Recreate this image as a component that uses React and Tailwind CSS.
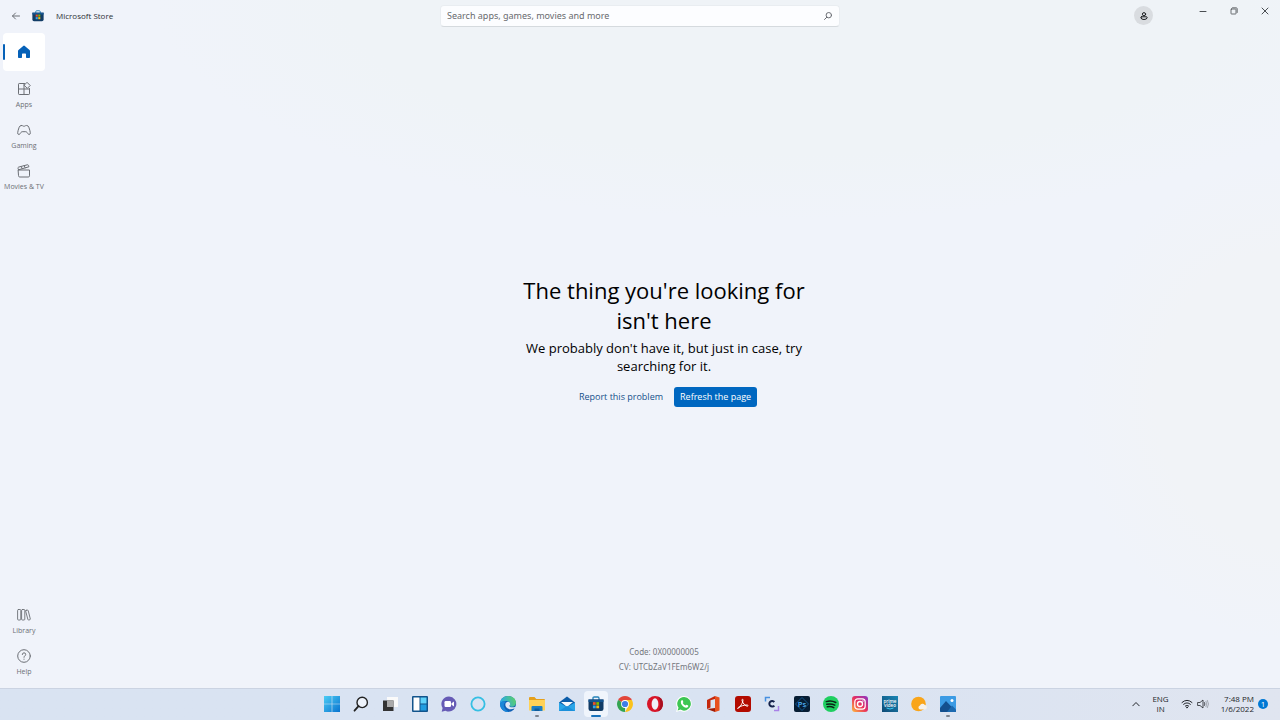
import React, { useState } from 'react';
import { clsx } from 'clsx';

const line = { fill: 'none', stroke: 'currentColor', strokeLinecap: 'round', strokeLinejoin: 'round' };

/* ---------- Store icons ---------- */

function StoreBag({ className }) {
  return (
    <svg viewBox="0 0 16 16" className={className}>
      <path d="M5 4V2.2Q5 1 6.2 1h3.6Q11 1 11 2.2V4" fill="none" stroke="#2583b8" strokeWidth="1.3" />
      <path d="M0.5 3.5h15v9.3q0 2.2-2.2 2.2H2.7Q.5 15 .5 12.8z" fill="#123c66" />
      <path d="M.5 3.5h15V6H.5z" fill="#155590" />
      <path d="M4.9 6.1h2.8v2.8H4.9z" fill="#e8552b" />
      <path d="M8.3 6.1h2.8v2.8H8.3z" fill="#7fba00" />
      <path d="M4.9 9.5h2.8v2.8H4.9z" fill="#35a5e1" />
      <path d="M8.3 9.5h2.8v2.8H8.3z" fill="#f5b915" />
    </svg>
  );
}

function HomeIcon() {
  return (
    <svg viewBox="0 0 14 14" className="w-3.5 h-3.5">
      <path d="M6.2.9q.8-.7 1.6 0l4.7 4q.5.5.5 1.2v6.1q0 .8-.8.8H9.7q-.7 0-.7-.7V9.2q0-.7-.7-.7H5.7Q5 8.5 5 9.2v3.1q0 .7-.7.7H1.8q-.8 0-.8-.8V6.1q0-.7.5-1.2z" fill="#0561b8" />
    </svg>
  );
}

function AppsIcon() {
  return (
    <svg viewBox="0 0 14 14" className="w-3.5 h-3.5" {...line}>
      <path d="M7.5 1.5H2.2q-.7 0-.7.7v9.6q0 .7.7.7h9.600q.7 0 .7-.7V6.500M1.500 7h11M7 1.500v11" />
      <path d="M10.300.6l2.900 2.900-2.900 2.900-2.900-2.900z" />
    </svg>
  );
}

function GamingIcon() {
  return (
    <svg viewBox="0 0 14 14" className="w-3.5 h-3.5" {...line}>
      <path d="M4.300 2.500h.6q.5 0 .9.400.4.300 1.200.3t1.200-.3q.4-.4.900-.4h.6q1.500 0 2.100 1.700 1.300 3.300 1.500 5.500.1 1.800-1.100 1.800-.7 0-1.200-.7L9.900 9.300Q9.500 8.700 8.800 8.700H5.200q-.7 0-1.100.6L3 10.800q-.5.700-1.200.7Q.6 11.500.7 9.700.9 7.500 2.200 4.200 2.800 2.500 4.300 2.500z" />
    </svg>
  );
}

function MoviesIcon() {
  return (
    <svg viewBox="0 0 14 14" className="w-3.5 h-3.5" {...line}>
      <path d="M1.500 6h11v5.800q0 1.200-1.200 1.200H2.700q-1.200 0-1.200-1.200zM1.500 5.800L1 4.300q-.2-.9.600-1.200L10.300.8q.9-.2 1.200.6l.4 1.400L1.500 5.800M4.200 2.600l1 2M7.200 1.800l1 2" />
    </svg>
  );
}

function LibraryIcon() {
  return (
    <svg viewBox="0 0 14 14" className="w-3.5 h-3.5" {...line} strokeWidth=".9">
      <rect x=".6" y="1.500" width="3.200" height="10.500" rx=".8" />
      <rect x="4.600" y="1.500" width="3.200" height="10.500" rx=".8" />
      <path d="M9.100 2.400l1.300-.3q.6-.1.800.5l2.100 8.300q.1.600-.4.800l-1.200.3q-.6.100-.8-.5L8.700 3.200q-.1-.6.400-.8z" />
    </svg>
  );
}

function HelpIcon() {
  return (
    <svg viewBox="0 0 14 14" className="w-3.5 h-3.5" {...line}>
      <circle cx="7" cy="7" r="6.300" />
      <path d="M5.300 5.500Q5.400 3.800 7 3.800t1.700 1.600Q8.700 6.300 7.700 7 7 7.500 7 8.300M7 10.100v.2" />
    </svg>
  );
}

/* ---------- Taskbar icons ---------- */

const TASKS = [
  {
    name: 'Start',
    art: (
      <>
        <defs>
          <linearGradient id="win" x1="0" y1="0" x2="1" y2="1">
            <stop offset="0" stopColor="#4ccdf5" />
            <stop offset="1" stopColor="#0873cf" />
          </linearGradient>
        </defs>
        <path d="M0 0h7.700v7.700H0zM8.300 0H16v7.700H8.300zM0 8.300h7.700V16H0zM8.300 8.300H16V16H8.300z" fill="url(#win)" />
      </>
    ),
  },
  {
    name: 'Search',
    art: (
      <>
        <circle cx="9.200" cy="6.400" r="5.200" fill="#eef3fb" stroke="#222" strokeWidth="1.400" />
        <path d="M5.500 10.200L1.500 14.700" stroke="#222" strokeWidth="1.800" strokeLinecap="round" />
      </>
    ),
  },
  {
    name: 'Task View',
    art: (
      <>
        <path d="M5 1h11v10H5z" fill="#fafafa" />
        <path d="M1 4.500h10.500V15H1z" fill="#333" />
        <path d="M5 4.500h6.500V11H5z" fill="#aaa" />
      </>
    ),
  },
  {
    name: 'Widgets',
    art: (
      <>
        <rect width="16" height="16" rx="1" fill="#12548c" />
        <path d="M1.500 1.500h6v13h-6z" fill="#fff" />
        <path d="M8.500 1.500h6v6h-6z" fill="#5fd3fa" />
        <path d="M8.500 8.500h6v6h-6z" fill="#209de0" />
      </>
    ),
  },
  {
    name: 'Chat',
    art: (
      <>
        <path d="M8 .5a7.500 7.500 0 1 1-3.500 14.200L.7 15.700l.9-3.700A7.500 7.500 0 0 1 8 .5z" fill="#665bb5" />
        <rect x="3.500" y="5" width="6.500" height="6" rx="1.200" fill="#fff" />
        <path d="M10.500 7.300L13 5.500v5l-2.500-1.800z" fill="#fff" />
      </>
    ),
  },
  {
    name: 'Cortana',
    art: <circle cx="8" cy="8" r="6.600" fill="none" stroke="#35bfe3" strokeWidth="1.800" />,
  },
  {
    name: 'Microsoft Edge',
    art: (
      <>
        <defs>
          <linearGradient id="edge" x1="0" y1=".3" x2="1" y2="0">
            <stop offset="0" stopColor="#2aa9e8" />
            <stop offset="1" stopColor="#5fd35d" />
          </linearGradient>
        </defs>
        <circle cx="8" cy="8" r="8" fill="#0f5fb5" />
        <path d="M0 8C0 3.500 3.500 0 8 0c4.800 0 8 3.300 8 6.700 0 2.300-1.700 4-4 4-1.800 0-3-.7-2.300-1.500 1-1.200.4-3.700-2.200-4C3.800 4.800.6 6 0 8z" fill="url(#edge)" />
        <path d="M9.700 9.200c1-1.200.3-3.200-1.400-3.400C5.800 5.700 5 8 5.500 9.800c.8 3 4.500 4.300 8.900 2.700.4-.1.700.1.500.5 1-.8 1.200-2 .8-2.600-1.300.8-2.300.9-3.700.8-1.900-.1-3.100-.8-2.300-2z" fill="#dce6f5" />
        <path d="M0 8c.4-2.600 3.800-3.500 6.400-2.100C4 6.400 3.200 9 4.400 11.600c.8 1.800 2.300 3.200 4.600 4.200C4 16.600 0 12.700 0 8z" fill="#1986d8" />
      </>
    ),
  },
  {
    name: 'File Explorer',
    running: true,
    art: (
      <>
        <path d="M0 2q0-1 1-1h4.500l1.800 2H15q1 0 1 1v3H0z" fill="#e5a01b" />
        <path d="M0 4h16v10q0 .5-.5.500H.5q-.5 0-.5-.5z" fill="#ffd257" />
        <path d="M2.500 11q0-1 1-1h9q1 0 1 1v4h-11z" fill="#1c7fc4" />
        <path d="M5.500 12.500h5V15h-5z" fill="#0e5c9c" />
      </>
    ),
  },
  {
    name: 'Mail',
    art: (
      <>
        <path d="M0 6.500L8 .5l8 6V15H0z" fill="#0b5ca8" />
        <path d="M2 6h12l-6 5z" fill="#f4f8fc" />
        <path d="M0 6.500l8 4.500 8-4.500V15H0z" fill="#29a5e8" />
        <path d="M0 15l8-5 8 5z" fill="#1b90da" />
      </>
    ),
  },
  { name: 'Microsoft Store', active: true, running: true },
  {
    name: 'Google Chrome',
    art: (
      <>
        <path d="M8 8L1.100 4A8 8 0 0 1 14.900 4z" fill="#e2463a" />
        <path d="M8 8v8A8 8 0 0 1 1.100 4z" fill="#33a452" />
        <path d="M8 4h6.900A8 8 0 0 1 8 16l3.500-6z" fill="#fbc31c" />
        <circle cx="8" cy="8" r="3.900" fill="#fff" />
        <circle cx="8" cy="8" r="3.100" fill="#3e7ee8" />
      </>
    ),
  },
  {
    name: 'Opera',
    art: (
      <>
        <circle cx="8" cy="8" r="8" fill="#d81528" />
        <path d="M11 .6A8 8 0 0 1 11 15.400C14 12 14 4 11 .6z" fill="#a80f20" />
        <ellipse cx="8" cy="8" rx="3.400" ry="5.700" fill="#eef2f9" />
      </>
    ),
  },
  {
    name: 'WhatsApp',
    art: (
      <>
        <path d="M8.200 0a7.800 7.800 0 1 1-3.900 14.700L0 16l1.300-4.200A7.800 7.800 0 0 1 8.200 0z" fill="#fff" />
        <path d="M8.200 1a6.800 6.800 0 1 1-3.700 12.600L1.600 14.500l.9-2.800A6.800 6.800 0 0 1 8.200 1z" fill="#3cc653" />
        <path d="M5.600 4.200q.8-.5 1.200.4l.5 1.300q.1.500-.6 1.200 1 1.800 2.700 2.500.8-1 1.200-.9l1.500.8q.4.300.1 1-.6 1.200-2.200 1.200Q6.500 11 5 7.500q-.6-2.200.6-3.300z" fill="#fff" />
      </>
    ),
  },
  {
    name: 'Office',
    art: (
      <>
        <path d="M10 0l4.500 1.500v13L10 16z" fill="#e8501e" />
        <path d="M10 0v3L5.500 4.200v7.300L2 13V4z" fill="#c5280c" />
        <path d="M2 13l8-1v4z" fill="#a11d08" />
      </>
    ),
  },
  {
    name: 'Adobe Acrobat',
    art: (
      <>
        <rect width="16" height="16" rx="3" fill="#b30b00" />
        <path d="M3 12.500C4.500 12 8.600 6 7.900 3.600 7.500 2.700 6.700 3.500 7.200 5c.7 2.300 3.200 5.200 5.200 5.200 1.300-.1.800-1.300-1-1.200-2.500.1-5.400 1-7.800 2.300-1 .7-1.300 1.300-.6 1.200z" fill="none" stroke="#fff" />
      </>
    ),
  },
  {
    name: 'Capture',
    art: (
      <>
        <path d="M1.500 5.500V1.500h4.500" fill="none" stroke="#4790e0" strokeWidth="1.500" />
        <path d="M14.500 10v4.500H10" fill="none" stroke="#a982e8" strokeWidth="1.500" />
        <path d="M10.300 6A2.800 2.800 0 1 0 10.300 9.600" fill="none" stroke="#15224a" strokeWidth="2" />
      </>
    ),
  },
  {
    name: 'Photoshop',
    art: (
      <>
        <rect width="16" height="16" rx="2" fill="#071d33" />
        <path d="M8 1.500L14.500 8 8 14.500 1.500 8z" fill="none" stroke="#1766a5" strokeWidth=".8" />
        <text x="8" y="10.700" textAnchor="middle" fontSize="7.500" fontWeight="600" fill="#4fb0f5">Ps</text>
      </>
    ),
  },
  {
    name: 'Spotify',
    art: (
      <>
        <circle cx="8" cy="8" r="8" fill="#1fcf60" />
        <path d="M3.300 5.600q5-1.400 9.500.9M3.800 8.300q4.300-1.100 8 .9M4.300 10.800q3.500-.8 6.500.9" fill="none" stroke="#0c2415" strokeWidth="1.500" strokeLinecap="round" />
      </>
    ),
  },
  {
    name: 'Instagram',
    art: (
      <>
        <defs>
          <linearGradient id="insta" x1="0" y1="1" x2="1" y2="0">
            <stop offset="0" stopColor="#ffb93b" />
            <stop offset=".5" stopColor="#e8305f" />
            <stop offset="1" stopColor="#8a35c8" />
          </linearGradient>
        </defs>
        <rect width="16" height="16" rx="3" fill="url(#insta)" />
        <rect x="2.800" y="2.800" width="10.400" height="10.400" rx="3" fill="none" stroke="#fff" strokeWidth="1.200" />
        <circle cx="8" cy="8" r="2.500" fill="none" stroke="#fff" strokeWidth="1.300" />
        <circle cx="11" cy="5" r=".7" fill="#fff" />
      </>
    ),
  },
  {
    name: 'Prime Video',
    art: (
      <>
        <defs>
          <linearGradient id="prime" x1="0" y1="1" x2="1" y2="0">
            <stop offset="0" stopColor="#0e4a75" />
            <stop offset="1" stopColor="#1a86b5" />
          </linearGradient>
        </defs>
        <rect width="16" height="16" fill="url(#prime)" />
        <g fill="#fff" fontSize="4.500" fontWeight="600" textAnchor="middle">
          <text x="8" y="6.500">prime</text>
          <text x="8" y="10.500">video</text>
        </g>
        <path d="M4.500 12q3.500 2 7 0" fill="none" stroke="#3ccaf4" />
      </>
    ),
  },
  {
    name: 'Weather',
    art: (
      <>
        <circle cx="7.500" cy="8" r="7.300" fill="#f9a51a" />
        <path d="M9 13.500a2 2 0 0 1 0-3.900 2.700 2.700 0 0 1 4.800-.6 2.300 2.300 0 0 1 .4 4.500z" fill="#f5f1ea" />
      </>
    ),
  },
  {
    name: 'Photos',
    running: true,
    art: (
      <>
        <rect width="16" height="16" rx="1" fill="#3c9be4" />
        <path d="M0 12l6-7 10 10.500-.5.500H1q-1 0-1-1z" fill="#134f8e" />
        <path d="M7 16l5-6.500 4 4V15q0 1-1 1z" fill="#1c6ab0" />
        <circle cx="12" cy="4.500" r="1.500" fill="#fff" />
      </>
    ),
  },
];

const NAV = [
  { id: 'apps', label: 'Apps', Icon: AppsIcon },
  { id: 'gaming', label: 'Gaming', Icon: GamingIcon },
  { id: 'movies', label: 'Movies & TV', Icon: MoviesIcon },
];

const FOOTER_NAV = [
  { id: 'library', label: 'Library', Icon: LibraryIcon },
  { id: 'help', label: 'Help', Icon: HelpIcon },
];

function NavButton({ label, Icon }) {
  return (
    <button className="flex h-[41px] w-full flex-col items-center justify-center gap-1 whitespace-nowrap text-[7px] leading-[10px] text-[#6c6f75]">
      <Icon />
      {label}
    </button>
  );
}

function TitleBar() {
  const [query, setQuery] = useState('');

  return (
    <header className="grid h-8 grid-cols-[1fr_minmax(0,400px)_1fr]">
      <div className="flex items-center pl-3">
        <button aria-label="Back" className="text-[#6b6e74]">
          <svg viewBox="0 0 8 8" className="h-2 w-2" {...line}>
            <path d="M7.500 4h-7M3.500 1L.5 4l3 3" />
          </svg>
        </button>
        <StoreBag className="ml-3 h-3 w-3" />
        <h1 className="ml-3 text-[8px] text-[#2d3036]">Microsoft Store</h1>
      </div>

      <label className="mt-[5px] flex h-[22px] items-center rounded-sm border border-b-[#d5dade] border-[#e9edf1] bg-[#fcfdff] px-1.5">
        <input
          value={query}
          onChange={(e) => setQuery(e.target.value)}
          aria-label="Search"
          placeholder="Search apps, games, movies and more"
          className="min-w-0 flex-1 font-['Noto_Sans',sans-serif] text-[9px] outline-none placeholder:text-[#686a6e]"
        />
        <svg viewBox="0 0 8 8" className="mr-px h-2 w-2 text-[#6b6e74]" {...line}>
          <circle cx="4.800" cy="3.200" r="2.700" />
          <path d="M2.800 5.200L.5 7.500" />
        </svg>
      </label>

      <div className="flex items-start justify-end">
        <button aria-label="Account" className="mr-[34px] mt-1.5 flex h-[19px] w-[19px] items-center justify-center rounded-full bg-[#d9dce0] text-[#17191c]">
          <svg viewBox="0 0 8 8" className="h-2 w-2" {...line}>
            <circle cx="4" cy="2.200" r="1.600" />
            <path d="M1.500 4.800h5q.7 0 .7.700Q7 7.500 4 7.500T.8 5.500q0-.7.700-.7z" />
          </svg>
        </button>
        <div className="flex text-[#4a4d52]">
          <button aria-label="Minimize" className="flex h-[21px] w-[31px] items-center justify-center">
            <svg viewBox="0 0 8 8" className="h-2 w-2" {...line}><path d="M1 4.500h6" /></svg>
          </button>
          <button aria-label="Restore" className="flex h-[21px] w-[31px] items-center justify-center">
            <svg viewBox="0 0 8 8" className="h-2 w-2" {...line} strokeWidth=".8">
              <path d="M1.500 2h4q.5 0 .5.500v4q0 .5-.5.500h-4Q1 7 1 6.500v-4Q1 2 1.500 2zM2.500.8h3.700q1 0 1 1v3.700" />
            </svg>
          </button>
          <button aria-label="Close" className="flex h-[21px] w-[31px] items-center justify-center">
            <svg viewBox="0 0 8 8" className="h-2 w-2" {...line}><path d="M1 1l6 6M7 1L1 7" /></svg>
          </button>
        </div>
      </div>
    </header>
  );
}

function Sidebar() {
  return (
    <nav className="flex w-12 shrink-0 flex-col pb-[5px]">
      <button
        aria-label="Home"
        className="relative mx-[3px] mb-1 mt-px flex h-[38px] items-center justify-center rounded bg-white"
      >
        <span className="absolute left-0 h-4 w-[2px] rounded bg-[#0561b8]" />
        <HomeIcon />
      </button>
      {NAV.map((item) => (
        <NavButton key={item.id} {...item} />
      ))}
      <div className="mt-auto">
        {FOOTER_NAV.map((item) => (
          <NavButton key={item.id} {...item} />
        ))}
      </div>
    </nav>
  );
}

function NotFound() {
  return (
    <main className="flex flex-1 flex-col items-center text-center">
      <div className="flex max-w-[300px] flex-1 flex-col items-center justify-center pt-1.5">
        <h2 className="text-[22px] font-medium leading-[30px] text-black">
          The thing you're looking for isn't here
        </h2>
        <p className="mt-1 text-[13px] font-medium leading-[18px] text-black">
          We probably don't have it, but just in case, try searching for it.
        </p>
        <div className="mt-3 flex items-center gap-[11px] pl-2 text-[9px]">
          <a href="#report" className="text-[#15508a]">Report this problem</a>
          <button className="h-5 rounded-[3px] bg-[#0067c0] px-1.5 text-white">Refresh the page</button>
        </div>
      </div>
      <footer className="pb-3.5 font-['Noto_Sans',sans-serif] text-[8px] leading-[15px] text-[#74777d]">
        <p>Code: 0X00000005</p>
        <p>CV: UTCbZaV1FEm6W2/j</p>
      </footer>
    </main>
  );
}

function Taskbar() {
  return (
    <div className="grid h-8 grid-cols-[1fr_641px_1fr] border-t border-[#cbd3e2] bg-linear-to-r from-[#d9e3f2] from-60% to-[#e0e5f0]">
      <div />
      <div className="flex items-center justify-between pb-px">
        {TASKS.map((task) => (
          <button
            key={task.name}
            aria-label={task.name}
            className={clsx(
              'relative flex h-[26px] w-6 items-center justify-center rounded-sm',
              task.active && 'bg-[#f0f5fc]'
            )}
          >
            {task.art ? (
              <svg viewBox="0 0 16 16" className="h-4 w-4">{task.art}</svg>
            ) : (
              <StoreBag className="h-4 w-4" />
            )}
            {task.running && (
              <span
                className={clsx(
                  'absolute bottom-0 h-[2px] rounded-full',
                  task.active ? 'w-2.5 bg-[#1670ba]' : 'w-1 bg-[#7d8590]'
                )}
              />
            )}
          </button>
        ))}
      </div>

      <div className="flex items-center justify-end pb-px pr-3 text-[8px] leading-[10px] text-[#24272c]">
        <button aria-label="Show hidden icons" className="mr-3">
          <svg viewBox="0 0 8 8" className="h-2 w-2" {...line}><path d="M.8 5.800L4 2.500l3.200 3.300" /></svg>
        </button>
        <button className="mr-3 text-center">
          ENG
          <br />
          IN
        </button>
        <button aria-label="Network and volume" className="mr-3 flex items-center gap-1">
          <svg viewBox="0 0 12 10" className="h-2.5 w-3" {...line}>
            <path d="M1 3.500q5-4.500 10 0M2.600 5.300q3.400-3 6.800 0M4.300 7q1.700-1.400 3.400 0" />
            <circle cx="6" cy="8.500" r=".5" />
          </svg>
          <svg viewBox="0 0 12 10" className="h-2.5 w-3" {...line} strokeWidth=".8">
            <path d="M1 3.500h2L6 1v8L3 6.500H1zM7.500 3.500q1 1.500 0 3" />
            <path d="M9 2.300q1.800 2.700 0 5.400M10.400 1.300q2.400 3.700 0 7.400" opacity=".4" />
          </svg>
        </button>
        <button className="text-right">
          7:48 PM
          <br />
          1/6/2022
        </button>
        <span className="ml-1 flex h-2.5 w-2.5 items-center justify-center rounded-full bg-[#0078d4] text-white">1</span>
      </div>
    </div>
  );
}

export default function App() {
  return (
    <div className="flex min-h-screen flex-col bg-[#f0f3fa] font-['Open_Sans','Noto_Sans',sans-serif]">
      <div className="flex flex-1 flex-col bg-[radial-gradient(ellipse_50%_32%_at_62%_0%,#eff3f7_70%,transparent),radial-gradient(ellipse_16%_35%_at_100%_58%,#f1f3f7_60%,transparent)]">
        <TitleBar />
        <div className="flex flex-1">
          <Sidebar />
          <NotFound />
        </div>
      </div>
      <Taskbar />
    </div>
  );
}
